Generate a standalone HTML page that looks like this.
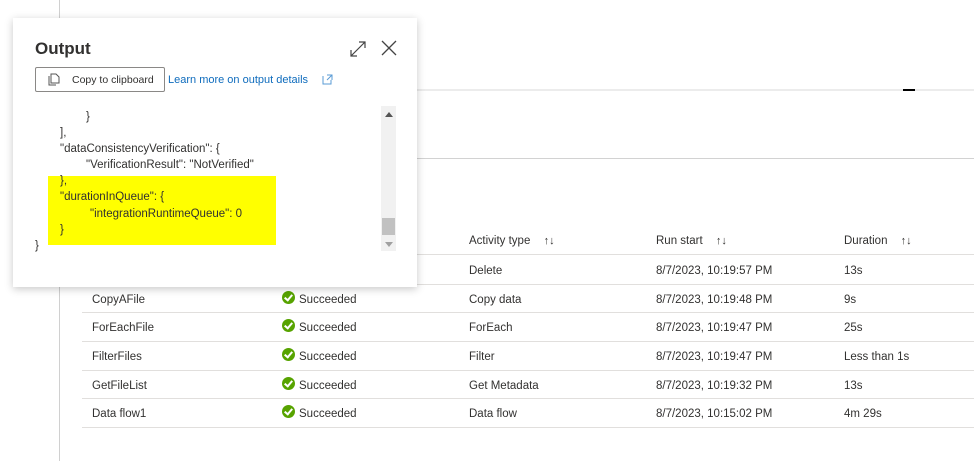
<!DOCTYPE html>
<html><head><style>
*{margin:0;padding:0;box-sizing:border-box}
body{width:974px;height:461px;background:#fff;position:relative;overflow:hidden;font-family:"Segoe UI","Liberation Sans",sans-serif;font-size:12px;color:#323130}
.abs{position:absolute}
.vl{left:59px;top:0;width:1px;height:461px;background:#d0d0d0}
.hl{height:1px;background:#e1dfdd}
.t{position:absolute;white-space:nowrap;font-size:11.5px;color:#323130}
.ck{position:absolute;width:13px;height:13px;border-radius:50%;background:#57a300}
.ck:after{content:"";position:absolute;left:4px;top:2px;width:3px;height:6px;border:solid #fff;border-width:0 2px 2px 0;transform:rotate(40deg)}
.panel{left:13px;top:18px;width:404px;height:269px;background:#fff;box-shadow:0 2px 8px rgba(0,0,0,.22)}
.code{font-size:11.5px;color:#323130;line-height:16.1px}
.tb .t{margin-top:2px}
</style></head><body>
<div class="abs vl"></div>
<div class="abs" style="left:416px;top:89px;width:558px;height:2px;background:#ececec"></div>
<div class="abs" style="left:903px;top:89px;width:12px;height:2px;background:#000"></div>
<div class="abs" style="left:416px;top:158px;width:558px;height:1px;background:#d2d2d2"></div>
<div class="tb">
<div class="t" style="left:469px;top:233px">Activity type <span style="margin-left:10px;font-size:11px">↑↓</span></div>
<div class="t" style="left:656px;top:233px">Run start <span style="margin-left:10px;font-size:11px">↑↓</span></div>
<div class="t" style="left:844px;top:233px">Duration <span style="margin-left:10px;font-size:11px">↑↓</span></div>
<div class="abs hl" style="left:82px;top:254px;width:892px"></div>

<div class="t" style="left:469px;top:263px">Delete</div><div class="t" style="left:656px;top:263px">8/7/2023, 10:19:57 PM</div><div class="t" style="left:844px;top:263px">13s</div>
<div class="abs hl" style="left:82px;top:284px;width:892px"></div>

<div class="t" style="left:92px;top:292px">CopyAFile</div><div class="ck" style="left:282px;top:291px"></div><div class="t" style="left:299px;top:292px">Succeeded</div><div class="t" style="left:469px;top:292px">Copy data</div><div class="t" style="left:656px;top:292px">8/7/2023, 10:19:48 PM</div><div class="t" style="left:844px;top:292px">9s</div>
<div class="abs hl" style="left:82px;top:312px;width:892px"></div>

<div class="t" style="left:92px;top:320px">ForEachFile</div><div class="ck" style="left:282px;top:319px"></div><div class="t" style="left:299px;top:320px">Succeeded</div><div class="t" style="left:469px;top:320px">ForEach</div><div class="t" style="left:656px;top:320px">8/7/2023, 10:19:47 PM</div><div class="t" style="left:844px;top:320px">25s</div>
<div class="abs hl" style="left:82px;top:341px;width:892px"></div>

<div class="t" style="left:92px;top:349px">FilterFiles</div><div class="ck" style="left:282px;top:348px"></div><div class="t" style="left:299px;top:349px">Succeeded</div><div class="t" style="left:469px;top:349px">Filter</div><div class="t" style="left:656px;top:349px">8/7/2023, 10:19:47 PM</div><div class="t" style="left:844px;top:349px">Less than 1s</div>
<div class="abs hl" style="left:82px;top:370px;width:892px"></div>

<div class="t" style="left:92px;top:378px">GetFileList</div><div class="ck" style="left:282px;top:377px"></div><div class="t" style="left:299px;top:378px">Succeeded</div><div class="t" style="left:469px;top:378px">Get Metadata</div><div class="t" style="left:656px;top:378px">8/7/2023, 10:19:32 PM</div><div class="t" style="left:844px;top:378px">13s</div>
<div class="abs hl" style="left:82px;top:398px;width:892px"></div>

<div class="t" style="left:92px;top:406px">Data flow1</div><div class="ck" style="left:282px;top:405px"></div><div class="t" style="left:299px;top:406px">Succeeded</div><div class="t" style="left:469px;top:406px">Data flow</div><div class="t" style="left:656px;top:406px">8/7/2023, 10:15:02 PM</div><div class="t" style="left:844px;top:406px">4m 29s</div>
<div class="abs hl" style="left:82px;top:427px;width:892px"></div>
</div>
<div class="abs panel">
  <div class="t" style="left:22px;top:21px;font-size:17px;font-weight:600;color:#323130">Output</div>
  <svg class="abs" style="left:336px;top:22px" width="18" height="18" viewBox="0 0 18 18"><path d="M2 16L16 2M10 2h6v6M2 10v6h6" fill="none" stroke="#444" stroke-width="1.2"/></svg>
  <svg class="abs" style="left:368px;top:22px" width="16" height="16" viewBox="0 0 16 16"><path d="M1 1L15 15M15 1L1 15" stroke="#444" stroke-width="1.3"/></svg>
  <div class="abs" style="left:22px;top:49px;width:130px;height:25px;border:1px solid #8a8886;border-radius:2px"></div>
  <svg class="abs" style="left:35px;top:55px" width="13" height="13" viewBox="0 0 13 13"><path d="M3 1h5l3 3v6H3zM1 3v9h7" fill="none" stroke="#555" stroke-width="1"/></svg>
  <div class="t" style="left:59px;top:56px;font-size:10.5px">Copy to clipboard</div>
  <div class="t" style="left:155px;top:56px;font-size:11px;color:#0f6cbd">Learn more on output details</div>
  <svg class="abs" style="left:309px;top:56px" width="11" height="11" viewBox="0 0 11 11"><path d="M1 2v8h8V6M5 1h5v5M10 1L5 6" fill="none" stroke="#5a9bd5" stroke-width="1"/></svg>
  <div class="abs" style="left:35px;top:158px;width:228px;height:69px;background:#ffff00"></div>
  <div class="abs code" style="left:22px;top:91px">
    <div style="padding-left:51px">}</div>
    <div style="padding-left:25px">],</div>
    <div style="padding-left:25px">"dataConsistencyVerification": {</div>
    <div style="padding-left:51px">"VerificationResult": "NotVerified"</div>
    <div style="padding-left:25px">},</div>
    <div style="padding-left:25px">"durationInQueue": {</div>
    <div style="padding-left:55px">"integrationRuntimeQueue": 0</div>
    <div style="padding-left:25px">}</div>
    <div>}</div>
  </div>
  <div class="abs" style="left:368px;top:88px;width:15px;height:145px;background:#f1f1f1"></div>
  <div class="abs" style="left:372px;top:94px;width:0;height:0;border:4px solid transparent;border-bottom:5px solid #555;border-top:0"></div>
  <div class="abs" style="left:369px;top:200px;width:13px;height:17px;background:#c1c1c1"></div>
  <div class="abs" style="left:372px;top:224px;width:0;height:0;border:4px solid transparent;border-top:5px solid #a0a0a0;border-bottom:0"></div>
</div>
</body></html>
